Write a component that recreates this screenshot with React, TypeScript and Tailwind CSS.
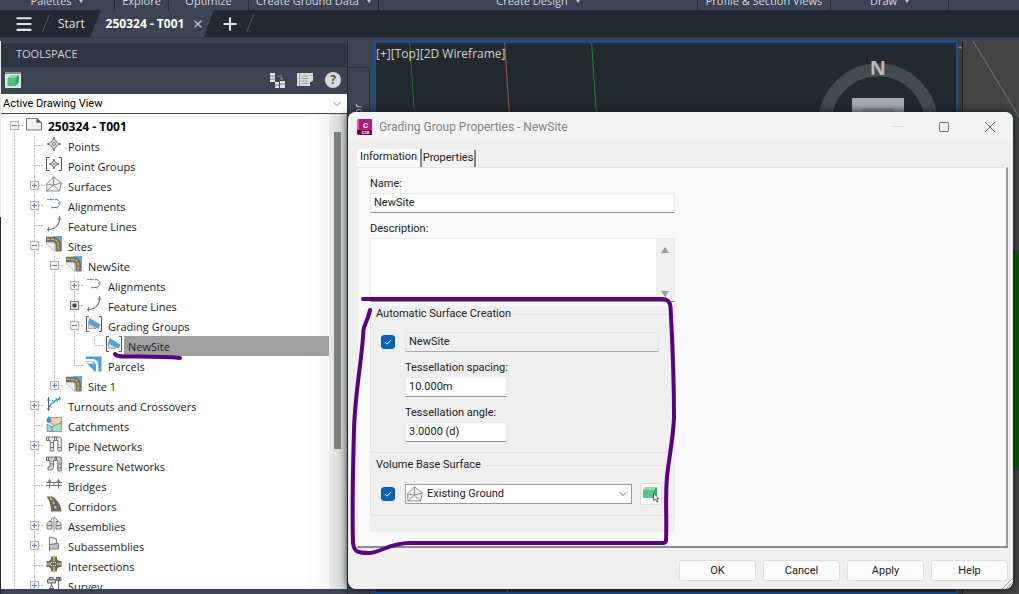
import React, { useState } from 'react';
import { ChevronDown, Menu, Plus, X } from 'lucide-react';

type IconName =
  | 'doc' | 'point' | 'pointGroup' | 'surface' | 'alignment' | 'featureLine' | 'site'
  | 'grading' | 'parcel' | 'turnout' | 'catchment' | 'pipe' | 'pressure' | 'bridge'
  | 'corridor' | 'assembly' | 'subassembly' | 'intersection' | 'survey';

type Toggle = 'plus' | 'minus' | 'dot';

interface TreeItem {
  label: string;
  depth: number;
  icon: IconName;
  toggle?: Toggle;
  last?: boolean;
}

const treeItems: TreeItem[] = [
  { label: '250324 - T001', depth: 0, icon: 'doc', toggle: 'minus' },
  { label: 'Points', depth: 1, icon: 'point' },
  { label: 'Point Groups', depth: 1, icon: 'pointGroup' },
  { label: 'Surfaces', depth: 1, icon: 'surface', toggle: 'plus' },
  { label: 'Alignments', depth: 1, icon: 'alignment', toggle: 'plus' },
  { label: 'Feature Lines', depth: 1, icon: 'featureLine' },
  { label: 'Sites', depth: 1, icon: 'site', toggle: 'minus' },
  { label: 'NewSite', depth: 2, icon: 'site', toggle: 'minus' },
  { label: 'Alignments', depth: 3, icon: 'alignment', toggle: 'plus' },
  { label: 'Feature Lines', depth: 3, icon: 'featureLine', toggle: 'dot' },
  { label: 'Grading Groups', depth: 3, icon: 'grading', toggle: 'minus' },
  { label: 'NewSite', depth: 4, icon: 'grading', last: true },
  { label: 'Parcels', depth: 3, icon: 'parcel', last: true },
  { label: 'Site 1', depth: 2, icon: 'site', toggle: 'plus', last: true },
  { label: 'Turnouts and Crossovers', depth: 1, icon: 'turnout', toggle: 'plus' },
  { label: 'Catchments', depth: 1, icon: 'catchment' },
  { label: 'Pipe Networks', depth: 1, icon: 'pipe', toggle: 'plus' },
  { label: 'Pressure Networks', depth: 1, icon: 'pressure' },
  { label: 'Bridges', depth: 1, icon: 'bridge' },
  { label: 'Corridors', depth: 1, icon: 'corridor' },
  { label: 'Assemblies', depth: 1, icon: 'assembly', toggle: 'plus' },
  { label: 'Subassemblies', depth: 1, icon: 'subassembly', toggle: 'plus' },
  { label: 'Intersections', depth: 1, icon: 'intersection' },
  { label: 'Survey', depth: 1, icon: 'survey', toggle: 'plus' },
];

const ribbonPanels = [
  { title: 'Palettes', width: 'w-[115px]', arrow: true },
  { title: 'Explore', width: 'w-[54px]', arrow: false },
  { title: 'Optimize', width: 'w-20', arrow: false },
  { title: 'Create Ground Data', width: 'w-[130px]', arrow: true },
  { title: 'Create Design', width: 'flex-1', arrow: true },
  { title: 'Profile & Section Views', width: 'w-[133px]', arrow: false },
  { title: 'Draw', width: 'w-[118px]', arrow: true },
];

const pointShape = 'M8 1l1.3 4.2h1.5v1.5L15 8l-4.2 1.3v1.5H9.3L8 15l-1.3-4.2H5.2V9.3L1 8l4.2-1.3V5.2h1.5z';

const treeIcons: Record<IconName, React.ReactNode> = {
  doc: (
    <>
      <path d="M.5 2.5h10.5l4.5 4v7.500H.5z" fill="#f1f1f1" stroke="#777" />
      <path d="M10.500 2l5 4.800h-5z" fill="#555" />
    </>
  ),
  point: (
    <g fill="#f4f4f4" stroke="#777">
      <path d={pointShape} />
      <circle cx="8" cy="8" r="1.500" />
    </g>
  ),
  pointGroup: (
    <g fill="none" stroke="#777">
      <path d="M3.500 1.500h-3v13h3M12.500 1.500h3v13h-3" stroke="#555" />
      <path d="M8 3l1 3h1v1l3 1-3 1v1H9l-1 3-1-3H6V9L3 8l3-1V6h1z" />
      <circle cx="8" cy="8" r="1" />
    </g>
  ),
  surface: (
    <g stroke="#808080" strokeWidth=".9">
      <path d="M7.500.8l7.800 6L13.500 15H.8L.6 8z" fill="#f3f3f3" />
      <path d="M7.500.8v8.400M.6 8l6.900 1.200 7.800-2.400M.8 15l6.700-5.800 6 5.800" fill="none" />
    </g>
  ),
  alignment: (
    <g fill="none">
      <path d="M1 3.500h9" stroke="#999" strokeDasharray="3 1" />
      <path d="M10 3.500a3.800 3.800 0 010 8H7" stroke="#777" strokeDasharray="3 1" />
      <path d="M4 3.500h2M9 3.500h2.500M13 6.500v2M10 11.500h2M5 11.500h2" stroke="#4da0dc" strokeWidth="1.500" />
    </g>
  ),
  featureLine: (
    <path d="M1 13.500h3c5-.5 9-4.500 9.500-9.500V0M11.500 3h4M2.500 11v4.500" fill="none" stroke="#777" strokeWidth="1.200" />
  ),
  site: (
    <>
      <path d="M7 0h9v15h-3V5.500z" fill="#5aa9e2" />
      <path d="M0 .8h7.500C12 1.500 14.800 4.500 15 9v6.500H9.500V9C9.300 7 8 6 6 5.900H0z" fill="#6c6c6c" />
      <path d="M0 6.500h5.500C8 6.600 8.800 8 9 10v5.500L1.500 9z" fill="#ededed" stroke="#aaa" strokeWidth=".7" />
      <path d="M1 3.300h6c3.500.4 5.200 2.500 5.300 5.700v6" fill="none" stroke="#e5b335" strokeWidth="1.600" strokeDasharray="3 1" />
    </>
  ),
  grading: (
    <>
      <path d="M3 .5H.5v15H3M13 .5h2.500v15H13" fill="none" stroke="#555" />
      <path d="M2.500 7.500v5h7.500z" fill="#ddd" stroke="#888" strokeWidth=".6" />
      <path d="M4 2.500l10 6.300-1.800 3.700L2.300 6.700z" fill="#55a6e0" stroke="#3989c5" strokeWidth=".6" />
    </>
  ),
  parcel: (
    <>
      <path d="M0 .5h15.500v15H8V9.500C8 7.500 6.500 6 4.500 6H0z" fill="#4f9fda" />
      <path d="M0 4.300h6c3 .2 5 2 5.200 5v6.200" fill="none" stroke="#fff" strokeWidth="2.400" />
      <path d="M1 7.500h4.500c1.500 0 2.500 1 2.500 2.500v5C6 12 3.500 10.500 1 7.500z" fill="#4f9fda" />
    </>
  ),
  turnout: (
    <g fill="none">
      <path d="M2.500 1v14M1 4h3M.8 13h3.400" stroke="#666" />
      <path d="M3 11.500C5 7 8 4 15 2.500" stroke="#3e97de" strokeWidth="1.300" />
      <path d="M13.500.500v4M10 2l1.500 4M6 4l3 3M2 9l4 2.500" stroke="#3e97de" />
    </g>
  ),
  catchment: (
    <>
      <path d="M3.500 1.500h12V7L9 10 3 6z" fill="#f8cdb0" stroke="#777" strokeWidth=".7" />
      <path d="M1 8l5 2.500V15.500H1z" fill="#99d2f0" stroke="#777" strokeWidth=".7" />
      <path d="M6 10.500l9.500-4v9H6z" fill="#a4e2b9" stroke="#777" strokeWidth=".7" />
      <path d="M3 0c1.500 2 2.500 3.200 2.500 4.500a2.500 2.500 0 01-5 0C.5 3.200 1.500 2 3 0z" fill="#3f97d4" />
    </>
  ),
  pipe: (
    <g fill="#e8e8e8" stroke="#6b6b6b" strokeWidth=".9">
      <path d="M.5 1h10v3.500H7.500V15H4.300V4.500H.5zM8.500 1H13c1.500 0 2.300 1 2.300 2.300V15h-3.500V4.500H8.500zM4 11.500h3.800M11.500 11.500h4M2.500 1v3.500M4.500 6.500h3" />
    </g>
  ),
  pressure: (
    <g fill="#d2d2d2" stroke="#6b6b6b" strokeWidth=".9">
      <path d="M.5 1h10v3.500H7.500V11a3 3 0 01-3 3H2v-3h2V4.500H.5zM9 1h6.300v14h-3.500V4.500H9zM11.500 12h4M2.500 1v3.500M4 8h3.500M12 8h3.500" />
    </g>
  ),
  bridge: (
    <path d="M0 6.500h16M0 9.500h16M3.500 3.500v9M12.500 3.500v9M1.500 6.500l2-3 2 3M10.500 6.500l2-3 2 3M8 6.500v3" fill="none" stroke="#777" />
  ),
  corridor: (
    <>
      <path d="M.5.5h6C11.500 4 15 9 15.500 15.500H5C5 9.500 3.800 4.500.5.5z" fill="#686868" />
      <path d="M4 1.500c3.500 4 5.500 8 6 14" fill="none" stroke="#efc23c" strokeWidth="1.700" strokeDasharray="3 2" />
    </>
  ),
  assembly: (
    <g fill="#d6d6d6" stroke="#707070" strokeWidth=".9">
      <path d="M1 7.500l2-2h3v7.500H1zM15 7.500l-2-2h-3v7.500h5zM1 9.500h5M10 9.500h5M8 .5v15M4 5.500l3-4M12 5.500l-3-4" />
    </g>
  ),
  subassembly: (
    <g fill="#c4c4c4" stroke="#707070" strokeWidth=".9">
      <path d="M3.500 8.500l9-1v5.500h-9z" />
      <path d="M3.500 15V1l7 2v4.500l-7 1" fill="#f2f2f2" />
    </g>
  ),
  intersection: (
    <>
      <path d="M5 .5h6V3l2 2h2.500v6H13l-2 2v2.500H5V13l-2-2H.5V5H3l2-2z" fill="#696969" />
      <path d="M8 .5V5M8 11v4.500M.5 8H5M11 8h4.500" stroke="#f0c23c" strokeWidth="1.500" />
      <path d="M5 6.500h6M5 9.500h6" stroke="#f2f2f2" strokeDasharray="1 1" />
    </>
  ),
  survey: (
    <g fill="none" stroke="#666">
      <path d="M1.500 3.500h8V7h-8zM3 3.500V1.500h4v2" fill="#c8c8c8" />
      <path d="M5.500 7v2L2 15.500M5.500 9L9 15.500M3 12.500h5M12.500 5v10.500M10.500 1.500h4.500v3h-4.500zM10.500 1.500l4.500 3M15 1.500l-4.500 3" />
    </g>
  ),
};

function TreeIcon({ name }: { name: IconName }) {
  return (
    <span className="flex w-5 shrink-0 justify-center pb-0.5">
      <svg className="size-4" viewBox="0 0 16 16">{treeIcons[name]}</svg>
    </span>
  );
}

// One 20px column of the dotted tree lines, with the expand box where the node has one
function Branch({ from = 0, to = 20, stub = false, toggle }: { from?: number; to?: number; stub?: boolean; toggle?: Toggle }) {
  return (
    <svg className="h-5 w-5 shrink-0" viewBox="0 0 20 20" fill="none">
      <path d={`M10.500 ${from}V${to}`} stroke="#c4c4c4" strokeDasharray="2 1" />
      {stub && <path d="M11 9.500h9" stroke="#bdbdbd" strokeDasharray="2 1" />}
      {toggle && <rect x="6.500" y="5.500" width="8" height="8" fill="#f1f1f1" stroke={toggle === 'dot' ? '#777' : '#b5b5b5'} />}
      {toggle === 'dot' && <circle cx="10.500" cy="9.500" r="2.200" fill="#444" />}
      {(toggle === 'plus' || toggle === 'minus') && <path d="M8 9.500h5" stroke="#6a7fb8" />}
      {toggle === 'plus' && <path d="M10.500 7v5" stroke="#6a7fb8" />}
    </svg>
  );
}

function TreeRow({ item, selected, onSelect }: { item: TreeItem; selected: boolean; onSelect: () => void }) {
  const guides = Array.from({ length: item.depth });
  return (
    <li className="flex h-5">
      {guides.map((_, i) => <Branch key={i} />)}
      <Branch from={item.depth === 0 ? 10 : 0} to={item.last ? 10 : 20} stub toggle={item.toggle} />
      <TreeIcon name={item.icon} />
      <button
        onClick={onSelect}
        className={`h-5 flex-1 pl-1 text-left leading-[22px] whitespace-nowrap ${selected ? 'bg-[#9f9f9f]' : ''} ${item.depth === 0 ? 'text-[12px] font-bold text-black' : 'text-[11px]'}`}
      >
        {item.label}
      </button>
    </li>
  );
}

function Ribbon() {
  return (
    <header className="flex h-[10px] items-end overflow-hidden bg-[#3b4453] text-[11px] text-[#d4d8de]">
      {ribbonPanels.map((panel) => (
        <div key={panel.title} className={`flex h-[18px] shrink-0 items-center justify-center gap-2 border-r border-[#252c37] leading-4 whitespace-nowrap ${panel.width}`}>
          {panel.title}
          {panel.arrow && (
            <svg className="h-[3px] w-1" viewBox="0 0 4 3"><path d="M0 0h4L2 3z" fill="#c5c9cf" /></svg>
          )}
        </div>
      ))}
      <div className="w-[70px] shrink-0" />
    </header>
  );
}

function Slash() {
  return (
    <svg className="h-5 w-2 shrink-0" viewBox="0 0 8 20"><path d="M.5 18L7.500 1" stroke="#535b67" fill="none" /></svg>
  );
}

function FileTabs() {
  return (
    <nav className="flex h-7 items-center border-b border-[#303846] bg-[#222933] text-[12px] text-[#dfe2e6]">
      <button aria-label="Menu" className="ml-3.5"><Menu className="size-5" strokeWidth={2.500} /></button>
      <span className="ml-2 flex"><Slash /></span>
      <button className="ml-2 w-8 text-left">Start</button>
      <div className="flex h-full w-[124px] items-center justify-center gap-2 bg-[#3b4453] pl-1.5 text-white [clip-path:polygon(11px_0,100%_0,calc(100%-10px)_100%,0_100%)]">
        <button className="font-bold whitespace-nowrap">250324 - T001</button>
        <button aria-label="Close tab"><X className="size-3 text-[#b4b8bf]" strokeWidth={3} /></button>
      </div>
      <button aria-label="New tab" className="ml-1.5"><Plus className="size-5" strokeWidth={2.500} /></button>
      <span className="ml-1.5 flex"><Slash /></span>
    </nav>
  );
}

function Toolspace() {
  const [selected, setSelected] = useState(11);
  return (
    <aside className="flex w-[346px] shrink-0 flex-col bg-[#3b4453]">
      <h2 className="mt-0.5 h-6 shrink-0 rounded-tr-sm bg-[#2f3441] pl-[15px] text-[11px] leading-[22px] text-[#ccd0d6]">TOOLSPACE</h2>
      <div className="flex h-[27px] shrink-0 items-center gap-3 pr-1.5 pb-0.5 pl-1">
        <button aria-label="Toggle drawing" className="mr-auto">
          <svg className="size-4" viewBox="0 0 16 16">
            <path d="M0 0h16v16H0z" fill="#e4e4e4" />
            <path d="M0 0h16v2H0z" fill="#8b8f93" />
            <path d="M2.500 6L6 3.500h8V10l-3.500 4h-8z" fill="#4fc078" />
            <path d="M2.500 6L6 3.500h8L10.500 6z" fill="#7cda9b" />
            <path d="M10.500 6L14 3.500V10l-3.500 4z" fill="#35a560" />
          </svg>
        </button>
        <button aria-label="Panorama">
          <svg className="size-4" viewBox="0 0 16 16" fill="none">
            <path d="M1 1h5v9H1zM6 10h4v6H6zM11 9h5v7h-5z" fill="#e2e2e2" />
            <path d="M8 4h4.500v4M11 6l1.500 2L14 6M1 4h5M1 7h5M6 13h4M11 12h5" stroke="#7b828c" />
          </svg>
        </button>
        <button aria-label="Preview">
          <svg className="size-4" viewBox="0 0 16 16">
            <path d="M0 1h16v8l-3 1v4H0z" fill="#dcdcdc" />
            <path d="M2.500 1v13M4.500 4H11M4.500 6.500H11M4.500 9H11M4.500 11.500H11M13 3.500h2" stroke="#9a9fa6" fill="none" />
          </svg>
        </button>
        <button aria-label="Help" className="size-4 rounded-full bg-[#d9d9d9] text-[12px] leading-4 font-bold text-[#505763]">?</button>
      </div>
      <div className="relative flex shrink-0">
        <select aria-label="View" className="h-[19px] w-full appearance-none bg-white pl-0.5 font-['Roboto','Noto_Sans',sans-serif] text-[11px] leading-4 text-black outline-none">
          <option>Active Drawing View</option>
        </select>
        <ChevronDown className="pointer-events-none absolute top-1 right-1 size-3 text-[#777]" />
      </div>
      <div className="mt-px mb-[5px] flex min-h-0 flex-1 bg-white">
        <ul className="min-w-0 flex-1 overflow-hidden bg-[linear-gradient(to_right,#fff_93%,#f7f7f7)] pt-0.5 pl-[3px] text-[#222]">
          {treeItems.map((item, i) => (
            <TreeRow key={i} item={item} selected={selected === i} onSelect={() => setSelected(i)} />
          ))}
        </ul>
        <div className="flex w-[18px] shrink-0 justify-center bg-linear-to-r from-[#ebebeb] to-[#cfcfcf] pt-[18px]">
          <div className="mr-0.5 h-[317px] w-[7px] bg-[#7f7f7f]" />
        </div>
      </div>
    </aside>
  );
}

function Viewport() {
  return (
    <section className="relative flex-1 overflow-hidden border-2 border-[#174f93] bg-[#222930]">
      <svg className="absolute inset-0 h-full w-full" fill="none">
        <path d="M33.500-2l5 75" stroke="#127a1c" />
        <path d="M128.500-2l5 75" stroke="#a25358" />
        <path d="M215.500-2l5 75" stroke="#128a2b" />
        <path d="M131.500 540v20" stroke="#129a2b" />
      </svg>
      <p className="relative text-[12px] leading-[22px] text-[#cdd1d5]">[+][Top][2D Wireframe]</p>
      {/* View cube with its compass ring */}
      <svg className="absolute top-3.5 right-3.5 h-32 w-32" viewBox="0 0 128 128">
        <circle cx="64" cy="66" r="53" fill="none" stroke="#454b53" strokeWidth="13" />
        <path d="M38 41h52v52H38z" fill="#a5a8ad" />
        <path d="M48 51h32v32H48z" fill="#8f949c" />
        <text x="64" y="18" textAnchor="middle" fontSize="20" fontWeight="bold" fill="#b6b8ba">N</text>
      </svg>
    </section>
  );
}

const inputClass = 'h-5 border border-b-[#8f8f8f] border-[#ececec] bg-white px-[3px] pb-0.5 text-[11px] outline-none';

function CheckBox({ label }: { label: string }) {
  return (
    <span className="relative flex size-[14px] shrink-0">
      <input type="checkbox" defaultChecked aria-label={label} className="peer size-[14px] appearance-none rounded-[3px] border border-[#005fb8] checked:bg-[#0560b8]" />
      <svg className="pointer-events-none absolute inset-0 hidden size-[14px] peer-checked:block" viewBox="0 0 14 14">
        <path d="M4 7.200l2 2 4-4" fill="none" stroke="#fff" />
      </svg>
    </span>
  );
}

function InformationPage() {
  return (
    <div className="flex flex-1 border border-t-[#e6e6e6] border-r-2 border-b-2 border-l-[#eee] border-r-[#989898] border-b-[#8d8d8d] bg-[#fafafa] pt-2 pl-3">
      <div className="w-[305px]">
        <label htmlFor="name" className="block leading-4">Name:</label>
        <input id="name" defaultValue="NewSite" className={`mt-px block w-full ${inputClass}`} />
        <label htmlFor="description" className="mt-2 block leading-4">Description:</label>
        <div className="mt-px flex h-16 border border-[#ececec] border-b-[#8f8f8f]">
          <textarea id="description" className="flex-1 resize-none bg-white outline-none" />
          <div className="flex w-[18px] flex-col items-center justify-between bg-[#f0f0f0] pt-2 pb-1">
            <svg className="h-[6px] w-2" viewBox="0 0 8 6"><path d="M4 0l4 6H0z" fill="#9c9c9c" /></svg>
            <svg className="h-[6px] w-2" viewBox="0 0 8 6"><path d="M4 6L0 0h8z" fill="#9c9c9c" /></svg>
          </div>
        </div>

        <div className="mt-1 bg-[#efefef] pb-4">
          <fieldset className="border border-[#e4e4e4] pb-2.5">
            <legend className="ml-0.5 px-[3px] leading-4">Automatic Surface Creation</legend>
            <div className="mt-2.5 flex items-center pr-[15px] pl-2.5">
              <CheckBox label="Create surface" />
              <input aria-label="Surface name" readOnly value="NewSite" className="ml-2.5 h-5 min-w-0 flex-1 border border-[#e6e6e6] border-b-[#a8a8a8] px-[3px] pb-0.5 text-[11px] outline-none" />
            </div>
            <div className="flex flex-col pl-[34px]">
              <label htmlFor="spacing" className="mt-2 leading-4">Tessellation spacing:</label>
              <input id="spacing" defaultValue="10.000m" className={`mt-px w-[102px] ${inputClass}`} />
              <label htmlFor="angle" className="mt-2 leading-4">Tessellation angle:</label>
              <input id="angle" defaultValue="3.0000 (d)" className={`mt-px w-[102px] ${inputClass}`} />
            </div>
          </fieldset>
          <fieldset className="mt-1 border border-[#e4e4e4] pb-2.5">
            <legend className="ml-0.5 px-[3px] leading-4">Volume Base Surface</legend>
            <div className="mt-2.5 flex items-center pr-3 pl-2.5">
              <CheckBox label="Use base surface" />
              <div className="relative ml-2.5 flex flex-1">
                <svg className="pointer-events-none absolute top-0.5 left-0.5 size-4" viewBox="0 0 16 16">{treeIcons.surface}</svg>
                <select aria-label="Base surface" className="h-5 w-full appearance-none border border-[#9a9a9a] bg-white pl-[21px] text-[11px] outline-none">
                  <option>Existing Ground</option>
                </select>
                <ChevronDown className="pointer-events-none absolute top-1 right-[3px] size-3 text-[#666]" />
              </div>
              <button aria-label="Pick surface" className="ml-2 flex size-[22px] items-center justify-center rounded-xs border border-[#dcdcdc] bg-[#fcfcfc]">
                <svg className="size-[18px]" viewBox="0 0 18 18">
                  <path d="M1 5l3-3h11v11H1z" fill="#57c583" />
                  <path d="M1 5l3-3h11l-3 3z" fill="#8bdda8" />
                  <path d="M12 5l3-3v10l-3 2z" fill="#36a764" />
                  <path d="M11.500 7.500v8l2-1.500 1.200 3 1.300-.6-1.200-2.800h2z" fill="#fff" stroke="#444" strokeWidth=".8" />
                </svg>
              </button>
            </div>
          </fieldset>
        </div>
      </div>
    </div>
  );
}

function GradingGroupDialog() {
  return (
    <div role="dialog" aria-label="Grading Group Properties" className="absolute top-[112px] right-1.5 bottom-[5px] left-[348px] flex flex-col overflow-hidden rounded-lg bg-[#efefef] font-['Roboto','Noto_Sans',sans-serif] text-[11px] text-[#222] shadow-[0_0_8px_#10141a]">
      <div className="flex h-[29px] shrink-0 items-center bg-[#f3f3f3] pr-[18px] pl-[9px]">
        <svg className="size-4" viewBox="0 0 16 16">
          <path d="M0 1l2-1h13v16H2l-2-1z" fill="#b5177f" />
          <path d="M0 1l2-1v11H0z" fill="#de5aad" />
          <path d="M0 11h15v5H2l-2-1z" fill="#6e0b4c" />
          <text x="8.500" y="8.500" textAnchor="middle" fontSize="8" fontWeight="bold" fill="#fff">C</text>
          <text x="8.500" y="14.800" textAnchor="middle" fontSize="4" fontWeight="bold" fill="#fff">C3D</text>
        </svg>
        <h1 className="ml-1.5 text-[12px] text-[#858585]">Grading Group Properties - NewSite</h1>
        <div className="ml-auto flex items-center gap-9">
          <button aria-label="Minimize" disabled className="h-px w-2.5 bg-[#dedede]" />
          <button aria-label="Maximize" className="size-2.5 rounded-[1px] border border-[#777]" />
          <button aria-label="Close">
            <svg className="size-2.5" viewBox="0 0 10 10"><path d="M0 0l10 10M10 0L0 10" stroke="#666" /></svg>
          </button>
        </div>
      </div>
      <div className="flex min-h-0 flex-1 flex-col pt-2 pr-[5px] pl-[9px]">
        <div role="tablist" className="flex h-[18px] shrink-0 items-end">
          <button role="tab" aria-selected="true" className="h-full w-[65px] border-r-2 border-[#858585] bg-[#fafafa] pb-0.5 leading-4">Information</button>
          <button role="tab" aria-selected="false" className="h-[17px] w-[54px] border-r-2 border-[#858585] bg-[#f3f3f3] pb-0.5 leading-[14px]">Properties</button>
        </div>
        <InformationPage />
        <div className="flex shrink-0 justify-end gap-[7px] pt-3 pb-2">
          {['OK', 'Cancel', 'Apply', 'Help'].map((label) => (
            <button key={label} className="h-[21px] w-[77px] rounded-[3px] border border-[#dedede] bg-[#fdfdfd] leading-4">{label}</button>
          ))}
        </div>
      </div>
      <svg className="absolute right-0 bottom-0 size-3" viewBox="0 0 12 12"><path d="M1 12L12 1M5 12l7-7" stroke="#999" /></svg>
    </div>
  );
}

// Purple pen marks drawn over the window
function PenMarks() {
  return (
    <svg className="pointer-events-none absolute inset-0 h-full w-full" fill="none" stroke="#5a0080" strokeWidth="4" strokeLinecap="round" strokeLinejoin="round">
      <path d="M115 354c1 2 4 2.500 10 2.500 18 0 36-.5 55 1.500" />
      <path d="M363 299H662c6 0 8 3 8.500 8 1.500 30 3.500 60 3.500 110-.5 20-5 40-7 60-2 22 0 42-1 64-.2 2-2 2-5 2H410c-22 0-29 10-42 10-11 0-14-2-15-10-1-37 0-77 1-113 1-38 8-70 9.500-100 1-7 4-8 6.500-20" />
    </svg>
  );
}

export default function App() {
  return (
    <div className="relative flex h-screen flex-col overflow-hidden bg-[#3b4453] font-['Open_Sans','Noto_Sans',sans-serif]">
      <Ribbon />
      <FileTabs />
      <main className="flex min-h-0 flex-1 pt-[3px]">
        <div className="flex w-px shrink-0 flex-col bg-[#222933]">
          <div className="h-44 bg-[#e8e8e8]" />
        </div>
        <Toolspace />
        <div className="flex w-[27px] shrink-0 flex-col border-l border-[#222933] pt-[26px] pr-1">
          <div className="flex flex-1 rounded-tr border-t border-r border-[#272e39] pt-9 pl-1 text-[11px] text-[#ccd0d6]">
            <span className="rotate-180 pb-0 text-right leading-3 [writing-mode:vertical-rl]">Prospector</span>
          </div>
        </div>
        <Viewport />
        <div className="flex w-[5px] shrink-0 justify-center border-r border-[#222] bg-[#363b42] text-[8px] text-[#aaa]">+</div>
        <div className="relative w-14 shrink-0 overflow-hidden bg-[#444]">
          <svg className="absolute inset-0 h-full w-full" fill="none">
            <path d="M10 0l46 76" stroke="#777" />
            <path d="M49 209h7v221l-7-3z" fill="#005c00" />
          </svg>
        </div>
      </main>
      <GradingGroupDialog />
      <PenMarks />
    </div>
  );
}
